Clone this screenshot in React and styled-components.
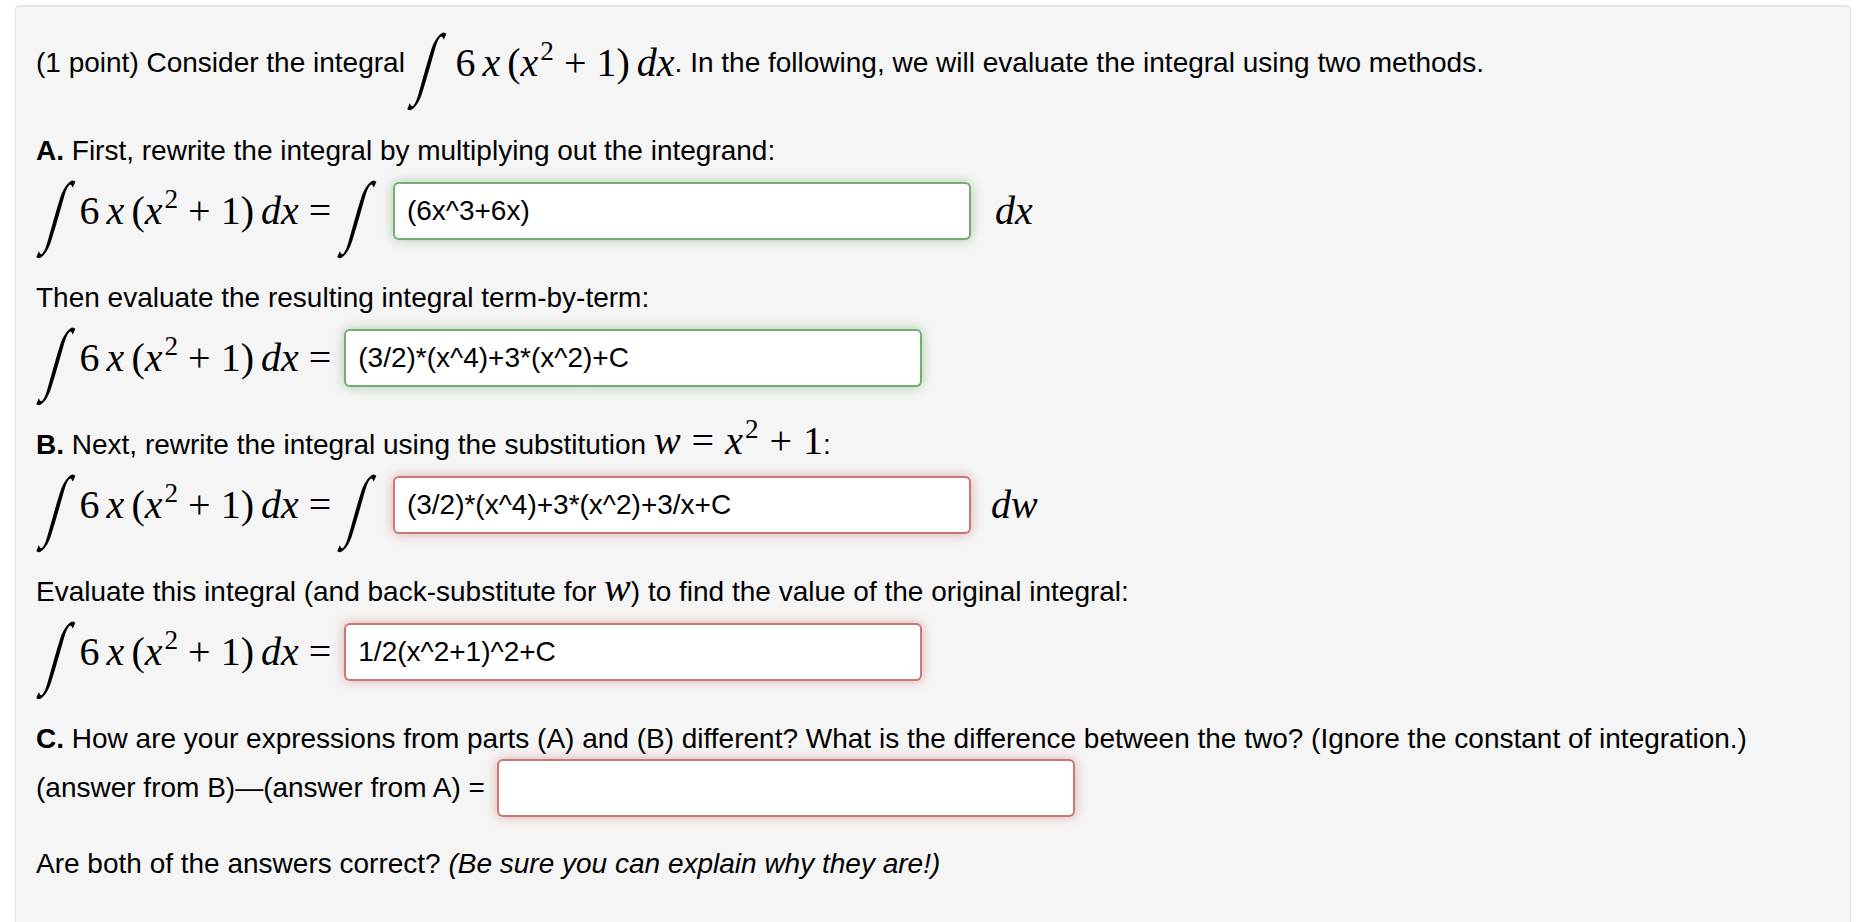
import React from 'react'
import styled, { createGlobalStyle } from 'styled-components'

const GlobalStyle = createGlobalStyle`
  html, body {
    margin: 0;
    overflow: hidden;
    background: #fff;
  }
  body {
    font-family: "Liberation Sans", Arial, sans-serif;
    color: #000;
  }
`

const Panel = styled.div`
  margin: 5px 12px 0 15px;
  min-height: 960px;
  box-sizing: border-box;
  padding: 17px 20px;
  background: #f5f5f5;
  border: 1px solid #e3e3e3;
  border-radius: 4px;
  box-shadow: inset 0 1px 1px rgba(0, 0, 0, 0.05);
  font-size: 28px;
  line-height: 40px;
`

const Intro = styled.div`
  display: flex;
  align-items: center;
  height: 80px;
  white-space: nowrap;
`

const Prompt = styled.div`
  margin-top: ${p => p.$top ?? 27}px;
  height: 40px;
  white-space: nowrap;
`

const Row = styled.div`
  display: flex;
  align-items: center;
  height: ${p => p.$h ?? 80}px;
`

// display-style integral sign: a thin upright glyph stretched and slanted
const Integral = styled.span`
  display: inline-block;
  font-family: "Liberation Serif", "Times New Roman", serif;
  font-size: 46px;
  line-height: 1;
  transform: skewX(-16deg) scaleY(1.72);
  margin-left: ${p => p.$left ?? 16}px;
  margin-right: ${p => p.$right ?? 15}px;
`

const MathRow = styled.span`
  display: inline-block;
  font-family: "Liberation Serif", "Times New Roman", serif;
  font-size: 40px;
  line-height: 40px;
  white-space: nowrap;
  margin-left: ${p => p.$left ?? 0}px;
  margin-right: ${p => p.$right ?? 0}px;
`

const MathInline = styled.span`
  font-family: "Liberation Serif", "Times New Roman", serif;
  font-size: 40px;
  line-height: 0;
`

const Mi = styled.i`
  margin-right: ${p => p.$r ?? 0}px;
`

const Mn = styled.span`
  margin-right: ${p => p.$r ?? 0}px;
`

const Mo = styled.span`
  margin: 0 ${p => p.$s ?? 9}px;
`

const Sup = styled.span`
  font-size: 0.68em;
  vertical-align: 0.6em;
  line-height: 0;
  margin-left: 2px;
`

const Answer = styled.input`
  box-sizing: border-box;
  width: 578px;
  height: 58px;
  margin-left: ${p => p.$left ?? 0}px;
  margin-right: ${p => p.$right ?? 0}px;
  padding: 0 12px;
  font-family: "Liberation Sans", Arial, sans-serif;
  font-size: 28px;
  color: #000;
  background: #fff;
  border: 2px solid ${p => (p.$ok ? 'rgba(81, 153, 81, 0.8)' : 'rgba(191, 84, 84, 0.8)')};
  border-radius: 6px;
  box-shadow: 0 0 12px ${p => (p.$ok ? 'rgba(81, 153, 81, 0.45)' : 'rgba(191, 84, 84, 0.45)')};
  outline: none;
`

const Text = styled.span`
  margin-right: ${p => p.$r ?? 0}px;
`

function Integrand() {
  return (
    <>
      <Mn $r={7}>6</Mn>
      <Mi $r={7}>x</Mi>
      <span>(</span>
      <Mi>x</Mi>
      <Sup>2</Sup>
      <Mo $s={10}>+</Mo>
      <Mn>1</Mn>
      <Mn $r={7}>)</Mn>
      <Mi>d</Mi>
      <Mi>x</Mi>
    </>
  )
}

function App() {
  return (
    <>
      <GlobalStyle />
      <Panel>
        <Intro>
          <Text>(1 point) Consider the integral</Text>
          <Integral $left={18} $right={20}>∫</Integral>
          <MathRow>
            <Integrand />
          </MathRow>
          <Text>. In the following, we will evaluate the integral using two methods.</Text>
        </Intro>

        <Prompt $top={28}>
          <strong>A.</strong> First, rewrite the integral by multiplying out the integrand:
        </Prompt>
        <Row>
          <Integral>∫</Integral>
          <MathRow>
            <Integrand />
            <Mo $s={10}>=</Mo>
          </MathRow>
          <Integral $left={12} $right={27}>∫</Integral>
          <Answer $ok readOnly value="(6x^3+6x)" $right={24} />
          <MathRow>
            <Mi>d</Mi>
            <Mi>x</Mi>
          </MathRow>
        </Row>

        <Prompt>Then evaluate the resulting integral term-by-term:</Prompt>
        <Row>
          <Integral>∫</Integral>
          <MathRow $right={3}>
            <Integrand />
            <Mo $s={10}>=</Mo>
          </MathRow>
          <Answer $ok readOnly value="(3/2)*(x^4)+3*(x^2)+C" />
        </Row>

        <Prompt>
          <strong>B.</strong> Next, rewrite the integral using the substitution{' '}
          <MathInline>
            <Mi>w</Mi>
            <Mo $s={11}>=</Mo>
            <Mi>x</Mi>
            <Sup>2</Sup>
            <Mo $s={11}>+</Mo>
            <span>1</span>
          </MathInline>
          :
        </Prompt>
        <Row>
          <Integral>∫</Integral>
          <MathRow>
            <Integrand />
            <Mo $s={10}>=</Mo>
          </MathRow>
          <Integral $left={12} $right={27}>∫</Integral>
          <Answer readOnly value="(3/2)*(x^4)+3*(x^2)+3/x+C" $right={20} />
          <MathRow>
            <Mi>d</Mi>
            <Mi>w</Mi>
          </MathRow>
        </Row>

        <Prompt>
          Evaluate this integral (and back-substitute for{' '}
          <MathInline>
            <Mi>w</Mi>
          </MathInline>
          ) to find the value of the original integral:
        </Prompt>
        <Row>
          <Integral>∫</Integral>
          <MathRow $right={3}>
            <Integrand />
            <Mo $s={10}>=</Mo>
          </MathRow>
          <Answer readOnly value="1/2(x^2+1)^2+C" />
        </Row>

        <Prompt>
          <strong>C.</strong> How are your expressions from parts (A) and (B) different? What is the
          difference between the two? (Ignore the constant of integration.)
        </Prompt>
        <Row $h={58}>
          <Text $r={12}>(answer from B)—(answer from A) =</Text>
          <Answer readOnly value="" />
        </Row>

        <Prompt>
          Are both of the answers correct? <em>(Be sure you can explain why they are!)</em>
        </Prompt>
      </Panel>
    </>
  )
}

export default App
